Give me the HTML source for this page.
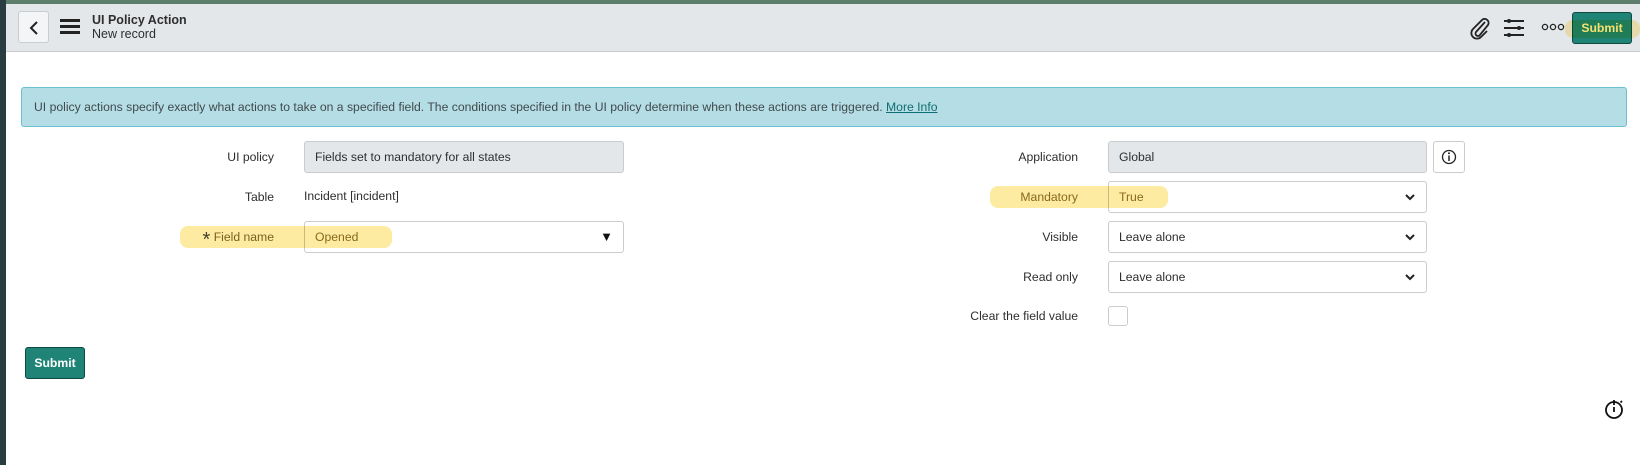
<!DOCTYPE html>
<html><head><meta charset="utf-8"><style>
*{box-sizing:border-box;margin:0;padding:0}
body{width:1640px;height:465px;overflow:hidden;background:#fff;font-family:"Liberation Sans",sans-serif;font-size:12.2px;color:#2e2e2e;position:relative}
.abs{position:absolute}
.top{left:0;top:0;width:1640px;height:4px;background:#5d7d6d}
.lstrip{left:0;top:0;width:6px;height:465px;background:#283d3f}
.hdr{left:6px;top:4px;width:1634px;height:48px;background:#e4e7ea;border-bottom:1px solid #c8cacc}
.back{left:18px;top:11px;width:31px;height:32px;border:1px solid #c9ccd0;border-radius:3px;background:#f4f5f6}
.lbl{text-align:right;width:240px;line-height:16px}
.inp{height:32px;border:1px solid #c9cbcd;border-radius:3px;padding:0 10px;line-height:30px;background:#fff}
.ro{background:#e4e7ea}
.hl{background:#fde68a;opacity:.8;mix-blend-mode:multiply;border-radius:8px}
.chev{position:absolute;right:10px;top:9px}
.btn{background:#1f8476;border:1px solid #0e4a41;border-radius:3px;color:#fff;font-weight:bold;text-align:center}
</style></head><body>
<div class="abs top"></div>
<div class="abs hdr"></div>
<div class="abs lstrip"></div>
<div class="abs back"><svg width="31" height="32" viewBox="0 0 31 32"><path d="M18 10 L12 16 L18 22" fill="none" stroke="#222" stroke-width="2"/></svg></div>
<svg class="abs" style="left:60px;top:19px" width="20" height="16"><rect y="0" width="20" height="3" fill="#222"/><rect y="6" width="20" height="3" fill="#222"/><rect y="12" width="20" height="3" fill="#222"/></svg>
<div class="abs" style="left:92px;top:13px;font-weight:bold;font-size:12.5px;line-height:14px">UI Policy Action</div>
<div class="abs" style="left:92px;top:27px;font-size:12.5px;line-height:14px">New record</div>
<svg class="abs" style="left:1468px;top:16px" width="24" height="24" viewBox="0 0 24 24"><path d="M17 6 L8 16 a2.5 2.5 0 0 0 3.5 3.5 L20 9 a4 4 0 0 0 -5.5 -5.5 L5 13 a5.5 5.5 0 0 0 8 8 L19 15" fill="none" stroke="#222" stroke-width="1.8"/></svg>
<svg class="abs" style="left:1503px;top:17px" width="22" height="22" viewBox="0 0 22 22"><path d="M1 4H21M1 11H21M1 18H21" stroke="#222" stroke-width="2"/><circle cx="6" cy="4" r="2" fill="#222"/><circle cx="16" cy="11" r="2" fill="#222"/><circle cx="6" cy="18" r="2" fill="#222"/></svg>
<svg class="abs" style="left:1541px;top:23px" width="24" height="8"><circle cx="4" cy="4" r="2.6" fill="none" stroke="#222" stroke-width="1.3"/><circle cx="12" cy="4" r="2.6" fill="none" stroke="#222" stroke-width="1.3"/><circle cx="20" cy="4" r="2.6" fill="none" stroke="#222" stroke-width="1.3"/></svg>
<div class="abs btn" style="left:1572px;top:12px;width:60px;height:32px;line-height:30px;color:#f6ef9a">Submit</div>
<div class="abs hl" style="left:1565px;top:20px;width:75px;height:18px;opacity:.6"></div>

<div class="abs" style="left:21px;top:87px;width:1606px;height:40px;background:#b5dde5;border:1px solid #6cc0cf;border-radius:3px;padding-left:12px;line-height:38px;color:#404a4c">UI policy actions specify exactly what actions to take on a specified field. The conditions specified in the UI policy determine when these actions are triggered. <span style="color:#0f6e73;text-decoration:underline">More Info</span></div>

<div class="abs lbl" style="left:34px;top:149px">UI policy</div>
<div class="abs inp ro" style="left:304px;top:141px;width:320px">Fields set to mandatory for all states</div>
<div class="abs lbl" style="left:34px;top:189px">Table</div>
<div class="abs" style="left:304px;top:189px">Incident [incident]</div>
<div class="abs lbl" style="left:34px;top:229px;color:#7b6a2e"><span style="font-size:20px;vertical-align:-5px;color:#444">*</span> Field name</div>
<div class="abs inp" style="left:304px;top:221px;width:320px;color:#8a7228">Opened<span style="position:absolute;right:10px;top:0;color:#111;font-size:13px">▼</span></div>

<div class="abs lbl" style="left:838px;top:149px">Application</div>
<div class="abs inp ro" style="left:1108px;top:141px;width:319px">Global</div>
<div class="abs inp" style="left:1433px;top:141px;width:32px;padding:0"><svg width="30" height="30"><circle cx="15" cy="15" r="6.5" fill="none" stroke="#222" stroke-width="1.3"/><path d="M15 13.5V19" stroke="#222" stroke-width="1.5"/><circle cx="15" cy="11.3" r="1" fill="#222"/></svg></div>

<div class="abs lbl" style="left:838px;top:189px;color:#8a7228">Mandatory</div>
<div class="abs inp" style="left:1108px;top:181px;width:319px;color:#8a7228">True<svg class="chev" width="12" height="12"><path d="M2 4L6 8L10 4" fill="none" stroke="#222" stroke-width="2"/></svg></div>
<div class="abs lbl" style="left:838px;top:229px">Visible</div>
<div class="abs inp" style="left:1108px;top:221px;width:319px">Leave alone<svg class="chev" width="12" height="12"><path d="M2 4L6 8L10 4" fill="none" stroke="#222" stroke-width="2"/></svg></div>
<div class="abs lbl" style="left:838px;top:269px">Read only</div>
<div class="abs inp" style="left:1108px;top:261px;width:319px">Leave alone<svg class="chev" width="12" height="12"><path d="M2 4L6 8L10 4" fill="none" stroke="#222" stroke-width="2"/></svg></div>
<div class="abs lbl" style="left:838px;top:308px">Clear the field value</div>
<div class="abs" style="left:1108px;top:306px;width:20px;height:20px;border:1px solid #c9cbcd;border-radius:3px"></div>

<div class="abs hl" style="left:180px;top:226px;width:212px;height:22px"></div>
<div class="abs hl" style="left:990px;top:186px;width:178px;height:22px"></div>

<div class="abs btn" style="left:25px;top:347px;width:60px;height:32px;line-height:30px">Submit</div>

<svg class="abs" style="left:1602px;top:397px" width="24" height="24" viewBox="0 0 24 24"><circle cx="12" cy="13" r="8" fill="none" stroke="#111" stroke-width="1.8"/><path d="M12 3V8M12 10V15" stroke="#111" stroke-width="1.8"/><path d="M18.5 5.5L20 4" stroke="#111" stroke-width="1.8"/></svg>
</body></html>
